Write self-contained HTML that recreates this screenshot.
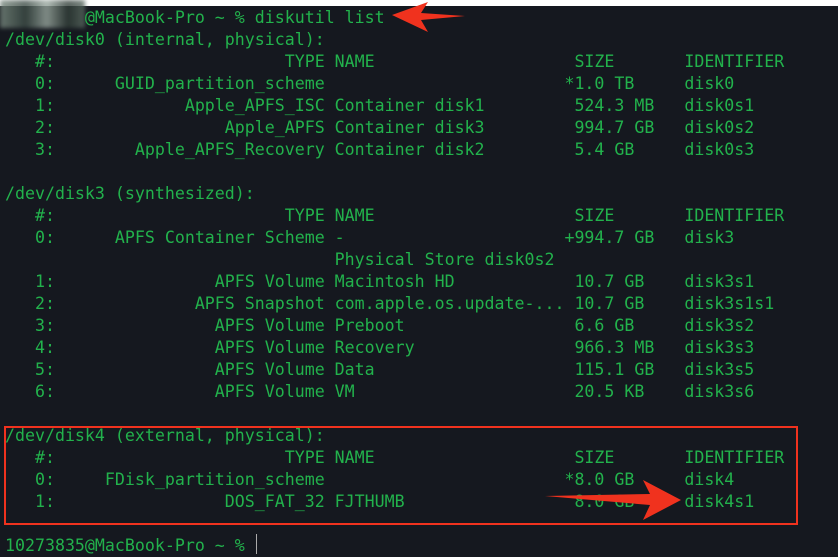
<!DOCTYPE html>
<html><head><meta charset="utf-8"><style>
html,body{margin:0;padding:0;}
body{width:838px;height:555px;background:#15181f;position:relative;overflow:hidden;}
.top{position:absolute;left:0;top:0;width:838px;height:6px;background:#fff;}
.blur{position:absolute;left:0;top:0;width:85px;height:28px;background:linear-gradient(90deg,#7a8a80,#3b4a44 30%,#9aa8a0 55%,#2f3c36 80%,#5b6a62);filter:blur(2px);opacity:.8}
pre{position:absolute;left:5px;top:7px;margin:0;font-family:"DejaVu Sans Mono","Liberation Mono",monospace;font-size:16.6px;line-height:22px;color:#22b24c;}
.box{position:absolute;left:4px;top:426px;width:790px;height:95px;border:2px solid #f0321e;}
.cur{position:absolute;left:256px;top:534px;width:1px;height:20px;background:#aaa;}
svg{position:absolute;left:0;top:0;}
</style></head><body>
<div class="top"></div><div class="blur"></div>
<pre>        @MacBook-Pro ~ % diskutil list
/dev/disk0 (internal, physical):
   #:                       TYPE NAME                    SIZE       IDENTIFIER
   0:      GUID_partition_scheme                        *1.0 TB     disk0
   1:             Apple_APFS_ISC Container disk1         524.3 MB   disk0s1
   2:                 Apple_APFS Container disk3         994.7 GB   disk0s2
   3:        Apple_APFS_Recovery Container disk2         5.4 GB     disk0s3

/dev/disk3 (synthesized):
   #:                       TYPE NAME                    SIZE       IDENTIFIER
   0:      APFS Container Scheme -                      +994.7 GB   disk3
                                 Physical Store disk0s2
   1:                APFS Volume Macintosh HD            10.7 GB    disk3s1
   2:              APFS Snapshot com.apple.os.update-... 10.7 GB    disk3s1s1
   3:                APFS Volume Preboot                 6.6 GB     disk3s2
   4:                APFS Volume Recovery                966.3 MB   disk3s3
   5:                APFS Volume Data                    115.1 GB   disk3s5
   6:                APFS Volume VM                      20.5 KB    disk3s6

/dev/disk4 (external, physical):
   #:                       TYPE NAME                    SIZE       IDENTIFIER
   0:     FDisk_partition_scheme                        *8.0 GB     disk4
   1:                 DOS_FAT_32 FJTHUMB                 8.0 GB     disk4s1

10273835@MacBook-Pro ~ % </pre>
<div class="cur"></div>
<div class="box"></div>
<svg width="838" height="555">
<path d="M392,15 L428,2 L421,13 L465,16 L421,20 L428,32 Z" fill="#f0321e"/>
<path d="M681,500 L643,480 L650,494 L545,496 L650,505 L643,520 Z" fill="#f0321e"/>
</svg>
</body></html>
